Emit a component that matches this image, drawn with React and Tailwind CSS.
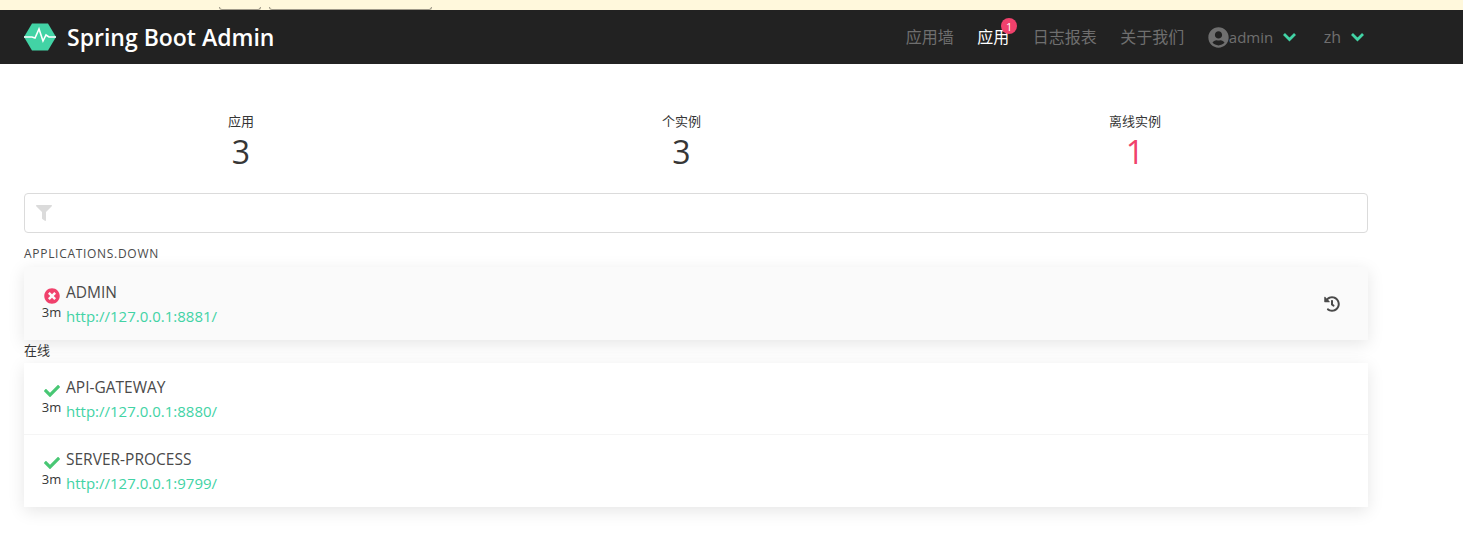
import React from "react";
import { FaFilter, FaTimesCircle, FaCheck, FaHistory, FaUserCircle } from "react-icons/fa";

const font = "font-['Open_Sans','Noto_Sans_CJK_SC',sans-serif]";

const Chevron = () => (
  <svg width="15" height="10" viewBox="0 0 15 10" className="ml-[9px]">
    <polyline points="2,2 7.5,7.5 13,2" fill="none" stroke="#42d3a5" strokeWidth="2.8" />
  </svg>
);

const Logo = () => (
  <svg width="32" height="28" viewBox="0 0 32 28" className="shrink-0">
    <polygon points="8,0.5 24,0.5 32,14 24,27.5 8,27.5 0,14" fill="#42d3a5" />
    <polyline
      points="0,14 8,14 11,15 15,6 19,18 22,12 25,14 32,14"
      fill="none"
      stroke="#fff"
      strokeWidth="1.6"
    />
  </svg>
);

const NavLink = ({ children, active, badge }) => (
  <span className={`relative text-base leading-6 ${active ? "text-white" : "text-[#6f6f6f]"}`}>
    {children}
    {badge && (
      <span className="absolute -top-[7px] -right-2 flex h-4 w-4 items-center justify-center rounded-full bg-[#f0416c] text-[11px] leading-none text-white">
        {badge}
      </span>
    )}
  </span>
);

const Stat = ({ label, value, color }) => (
  <div className="flex flex-auto flex-col items-center">
    <p className="text-[13px] leading-[18px] text-[#363636]">{label}</p>
    <p className={`mt-[2px] text-[32px] font-medium leading-[40px] ${color}`}>{value}</p>
  </div>
);

const AppRow = ({ name, url, down, border }) => (
  <div className={`flex items-center pl-[13px] pr-7 ${down ? "h-[73px] bg-[#fafafa] pt-px" : "h-[72px]"} ${border ? "border-b border-[#f5f5f5]" : ""}`}>
    <div className="flex w-[29px] flex-col items-center">
      {down ? (
        <FaTimesCircle className="mt-[1px] text-[16px] text-[#f0416c]" />
      ) : (
        <FaCheck className="mt-[1px] text-[16px] text-[#48c774]" />
      )}
      <span className="-mt-[1px] text-[13px] leading-[18px] text-[#363636]">3m</span>
    </div>
    <div className="flex-1">
      <p className="text-[15.5px] leading-6 text-[#4a4a4a]">{name}</p>
      <a className="block text-[15px] leading-6 text-[#42d3a5]">{url}</a>
    </div>
    {down && <FaHistory className="text-[16px] text-[#4a4a4a]" />}
  </div>
);

const App = () => {
  return (
    <div className={`${font} min-h-[542px] bg-white`}>
      <div className="flex h-[10px] items-end bg-[#fff8dc] pl-[219px]">
        <div className="h-[3px] w-[42px] rounded-b border border-t-0 border-[#a09a8a]"></div>
        <div className="ml-2 h-[3px] w-[163px] rounded-b border border-t-0 border-[#a09a8a]"></div>
      </div>

      <nav className="flex h-[54px] items-center bg-[#222] pl-6 pr-[98px]">
        <Logo />
        <span className="ml-[11px] text-[23px] font-semibold text-white">Spring Boot Admin</span>
        <div className="ml-auto flex items-center gap-[23.5px]">
          <NavLink>应用墙</NavLink>
          <NavLink active badge="1">应用</NavLink>
          <NavLink>日志报表</NavLink>
          <NavLink>关于我们</NavLink>
          <div className="flex items-center text-[#6f6f6f]">
            <FaUserCircle className="text-[21px]" />
            <span className="text-[15px]">admin</span>
            <Chevron />
          </div>
          <div className="ml-[3px] flex items-center text-[#6f6f6f]">
            <span className="text-base">zh</span>
            <Chevron />
          </div>
        </div>
      </nav>

      <main className="w-[1392px] px-6 pt-[48px]">
        <div className="flex pr-[3px]">
          <Stat label="应用" value="3" color="text-[#363636]" />
          <Stat label="个实例" value="3" color="text-[#363636]" />
          <Stat label="离线实例" value="1" color="text-[#f0416c]" />
        </div>

        <div className="mt-[21px] flex h-10 items-center rounded border border-[#dbdbdb] pl-[11px]">
          <FaFilter className="text-[16px] text-[#dbdbdb]" />
        </div>

        <p className="mt-[12px] text-xs leading-[18px] tracking-[0.7px] text-[#4a4a4a]">APPLICATIONS.DOWN</p>
        <div className="mt-[4px] shadow-[0_4px_16px_rgba(10,10,10,0.1)]">
          <AppRow name="ADMIN" url="http://127.0.0.1:8881/" down />
        </div>

        <p className="mt-[1px] text-[13px] leading-[18px] text-[#363636]">在线</p>
        <div className="mt-[4px] shadow-[0_4px_16px_rgba(10,10,10,0.1)]">
          <AppRow name="API-GATEWAY" url="http://127.0.0.1:8880/" border />
          <AppRow name="SERVER-PROCESS" url="http://127.0.0.1:9799/" />
        </div>
      </main>
    </div>
  );
};

export default App;
